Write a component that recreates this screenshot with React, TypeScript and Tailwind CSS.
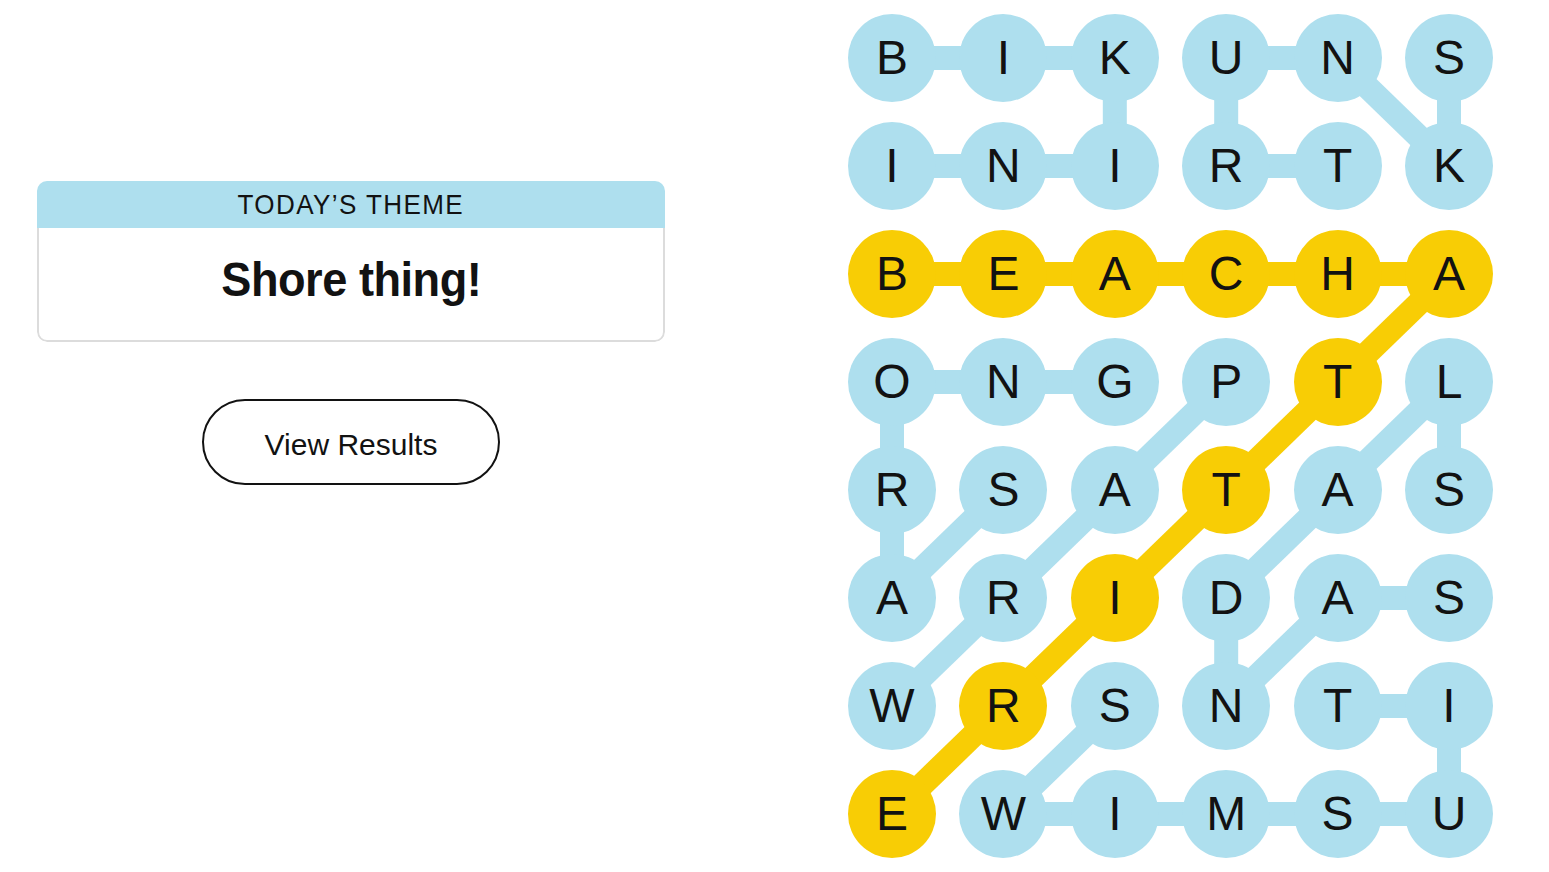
const rows = ["BIKUNS", "INIRTK", "BEACHA", "ONGPTL", "RSATAS", "ARIDAS", "WRSNTI", "EWIMSU"];

type Cell = [number, number];
type Link = [Cell, Cell];

const blueLinks: Link[] = [
  // bikini
  [[0, 0], [0, 1]], [[0, 1], [0, 2]], [[0, 2], [1, 2]], [[1, 2], [1, 1]], [[1, 1], [1, 0]],
  // trunks
  [[1, 4], [1, 3]], [[1, 3], [0, 3]], [[0, 3], [0, 4]], [[0, 4], [1, 5]], [[1, 5], [0, 5]],
  // sarong
  [[4, 1], [5, 0]], [[5, 0], [4, 0]], [[4, 0], [3, 0]], [[3, 0], [3, 1]], [[3, 1], [3, 2]],
  // wrap
  [[6, 0], [5, 1]], [[5, 1], [4, 2]], [[4, 2], [3, 3]],
  // swimsuit
  [[6, 2], [7, 1]], [[7, 1], [7, 2]], [[7, 2], [7, 3]], [[7, 3], [7, 4]], [[7, 4], [7, 5]], [[7, 5], [6, 5]], [[6, 5], [6, 4]],
  // sandals
  [[5, 5], [5, 4]], [[5, 4], [6, 3]], [[6, 3], [5, 3]], [[5, 3], [4, 4]], [[4, 4], [3, 5]], [[3, 5], [4, 5]],
];

const spangram: Cell[] = [[2, 0], [2, 1], [2, 2], [2, 3], [2, 4], [2, 5], [3, 4], [4, 3], [5, 2], [6, 1], [7, 0]];

const yellowLinks: Link[] = spangram.slice(1).map((c, i) => [spangram[i], c]);

const cx = (c: number) => 44 + c * 111.4;
const cy = (r: number) => 44 + r * 108;

const isYellow = (r: number, c: number) => spangram.some(([a, b]) => a === r && b === c);

const ThemeCard = () => (
  <div className="w-[628px] rounded-[10px] overflow-hidden">
    <div className="h-[47px] bg-[#aedfee] flex items-center justify-center">
      <span className="text-[28px] tracking-[1.5px] text-[#121212] font-['Liberation_Sans',Arial,sans-serif] leading-none scale-x-[0.93]">
        TODAY’S THEME
      </span>
    </div>
    <div className="h-[114px] border-x-2 border-b-2 border-[#dcdcdc] rounded-b-[10px] flex items-center justify-center pb-[8px]">
      <span className="text-[48px] font-bold text-[#121212] font-['Liberation_Sans',Arial,sans-serif] leading-none tracking-[-0.5px] scale-x-[0.94]">
        Shore thing!
      </span>
    </div>
  </div>
);

const Board = () => (
  <div className="relative w-[645px] h-[844px]">
    <svg className="absolute inset-0" width="645" height="844" viewBox="0 0 645 844">
      {blueLinks.map(([a, b], i) => (
        <line key={"b" + i} x1={cx(a[1])} y1={cy(a[0])} x2={cx(b[1])} y2={cy(b[0])} stroke="#aedfee" strokeWidth="24" />
      ))}
      {yellowLinks.map(([a, b], i) => (
        <line key={"y" + i} x1={cx(a[1])} y1={cy(a[0])} x2={cx(b[1])} y2={cy(b[0])} stroke="#f8cd05" strokeWidth="24" />
      ))}
    </svg>
    <div className="relative grid grid-cols-6 gap-x-[23.4px] gap-y-[20px]">
      {rows.map((row, r) =>
        row.split("").map((ch, c) => (
          <div
            key={r + "-" + c}
            className={`w-[88px] h-[88px] rounded-full flex items-center justify-center text-[48px] leading-none text-[#121212] font-['Liberation_Sans',Arial,sans-serif] ${
              isYellow(r, c) ? "bg-[#f8cd05]" : "bg-[#aedfee]"
            }`}
          >
            {ch}
          </div>
        ))
      )}
    </div>
  </div>
);

export default function App() {
  return (
    <div className="w-[1549px] h-[872px] bg-white flex pl-[37px] overflow-hidden">
      <div className="w-[628px] pt-[181px] flex flex-col items-center">
        <ThemeCard />
        <button className="mt-[57px] w-[298px] h-[86px] rounded-full border-2 border-[#121212] text-[30px] text-[#121212] font-['Liberation_Sans',Arial,sans-serif] flex items-center justify-center pt-[4px]">
          View Results
        </button>
      </div>
      <div className="ml-[183px] pt-[14px]">
        <Board />
      </div>
    </div>
  );
}
